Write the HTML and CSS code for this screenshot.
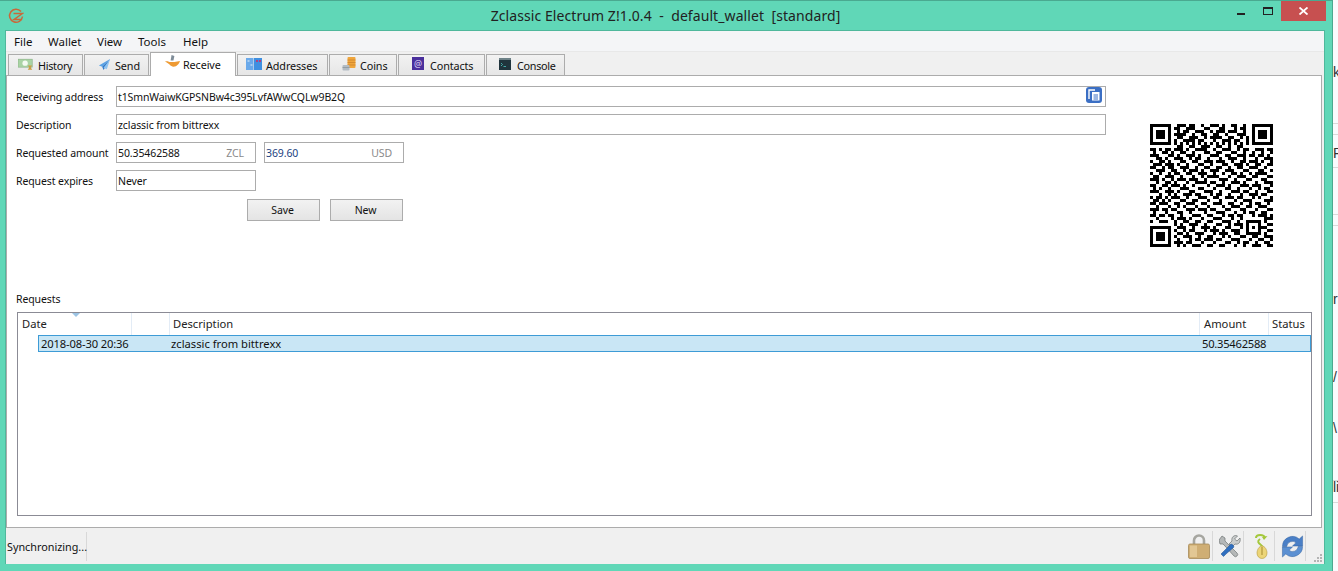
FILE: index.html
```html
<!DOCTYPE html>
<html lang="en">
<head>
<meta charset="utf-8">
<title>Zclassic Electrum Z!1.0.4</title>
<link rel="stylesheet" href="styles.css">
</head>
<body>
<div class="screen">
  <div class="window">
    <header class="titlebar">
      <div class="title-left">
        <svg class="logo" viewBox="0 0 16 16"><path d="M13 3.500A6.500 6.500 0 1 0 14.500 8.500" fill="none" stroke="#c9683a" stroke-width="1.500"/><path d="M5.500 5.500h9L6 11.500h7.500" fill="none" stroke="#c9683a" stroke-width="1.500"/></svg>
      </div>
      <div class="title-text">Zclassic Electrum Z!1.0.4&nbsp; -&nbsp; default_wallet&nbsp; [standard]</div>
      <div class="caption">
        <span class="cap-min"></span>
        <span class="cap-max"></span>
        <span class="cap-close"><svg viewBox="0 0 9 8" width="9" height="8"><path d="M.5.5l8 7M8.500.5l-8 7" stroke="#fff" stroke-width="1.800"/></svg></span>
      </div>
    </header>
    <div class="client">
      <nav class="menubar">
        <span class="menu m-file">File</span><span class="menu m-wallet">Wallet</span><span class="menu m-view">View</span><span class="menu m-tools">Tools</span><span class="menu m-help">Help</span>
      </nav>
      <div class="tabbar">
        <div class="tab t-history">
          <svg class="ticon" viewBox="0 0 18 14"><rect y="1" width="16" height="9" fill="#a9d3a4" stroke="#7fa97e" stroke-width=".6"/><circle cx="8" cy="5.500" r="3" fill="#f4fbf2"/><path d="M11 8h5l-1.700 2.500L16 13h-5l1.700-2.500z" fill="#c99f45"/></svg>
          <span>History</span>
        </div>
        <div class="tab t-send">
          <svg class="ticon ticon-send" viewBox="0 0 14 14"><path d="M13 1L1 8l3.500 1.500z" fill="#5aa3e6"/><path d="M13 1L4.500 9.500 6 13z" fill="#2f78c9"/><path d="M13 1L6 10.500l3.500 1.500z" fill="#8fc3f0"/></svg>
          <span>Send</span>
        </div>
        <div class="tab t-receive active">
          <svg class="ticon ticon-lg" viewBox="0 0 16 16"><path d="M0 8c3-1 4 .5 6 .5h4c2 0 4-1 6-1-1 3-3 6-7 6-3 0-5-4-9-5.500z" fill="#ee9a33"/><path d="M7 1l3 1-1 5H6z" fill="#7e8c98"/></svg>
          <span>Receive</span>
        </div>
        <div class="tab t-addresses">
          <svg class="ticon" viewBox="0 0 16 13"><rect width="7.500" height="12" fill="#6aa9ea"/><rect x="8" width="8" height="12" fill="#3f8fe0"/><rect x="1.500" y="2" width="2" height="2" fill="#a8cdf2"/><rect x="4.500" y="6" width="2" height="2" fill="#a8cdf2"/><rect x="10" y="2" width="2" height="2" fill="#b0417f"/><rect x="13" y="2" width="2" height="2" fill="#b0417f"/></svg>
          <span>Addresses</span>
        </div>
        <div class="tab t-coins">
          <svg class="ticon ticon-coins" viewBox="0 0 13 14"><rect x="5" y="0" width="8" height="11" rx="1" fill="#f0a63c"/><path d="M5 3h8M5 5.500h8M5 8h8" stroke="#c9802a" stroke-width=".7"/><rect y="8" width="7" height="5.500" rx="1" fill="#b3bcc4"/><path d="M0 10.500h7" stroke="#85909a" stroke-width=".7"/></svg>
          <span>Coins</span>
        </div>
        <div class="tab t-contacts">
          <span class="at-icon">@</span>
          <span>Contacts</span>
        </div>
        <div class="tab t-console">
          <svg class="ticon ticon-console" viewBox="0 0 12 12"><rect width="12" height="12" fill="#20343c"/><rect width="12" height="2" fill="#6e8288"/><path d="M2 5l1.500 1.500L2 8" stroke="#4fc7c0" fill="none" stroke-width=".8"/><path d="M4.500 8.500h2.500" stroke="#4fc7c0" stroke-width=".8"/></svg>
          <span>Console</span>
        </div>
      </div>
      <main class="panel">
        <section class="top">
          <div class="form">
            <div class="row">
              <label class="label">Receiving address</label>
              <div class="field field-full">
                <span>t1SmnWaiwKGPSNBw4c395LvfAWwCQLw9B2Q</span>
                <svg class="copy" viewBox="0 0 16 16"><rect width="16" height="16" rx="3" fill="#3b6fc4"/><path d="M3 12V3h6" fill="none" stroke="#fff" stroke-width="1.400"/><rect x="6" y="5" width="7.500" height="8.500" fill="#fff"/><path d="M7.500 8h4.500M7.500 10h4.500M7.500 12h4.500" stroke="#3b6fc4"/></svg>
              </div>
            </div>
            <div class="row">
              <label class="label">Description</label>
              <div class="field field-full"><span>zclassic from bittrexx</span></div>
            </div>
            <div class="row">
              <label class="label">Requested amount</label>
              <div class="field field-small"><span>50.35462588</span><span class="unit">ZCL</span></div>
              <div class="field field-small field-fiat"><span>369.60</span><span class="unit">USD</span></div>
            </div>
            <div class="row">
              <label class="label">Request expires</label>
              <div class="field field-small"><span>Never</span></div>
            </div>
            <div class="buttons">
              <button class="btn">Save</button>
              <button class="btn">New</button>
            </div>
          </div>
          <svg class="qr" viewBox="0 0 41 41" shape-rendering="crispEdges"><path fill="none" stroke="#000" stroke-width="1" d="M0 .5h7M9 .5h3M13 .5h2M17 .5h1M20 .5h3M24 .5h1M27 .5h2M31 .5h1M34 .5h7M0 1.500h1M6 1.500h1M8 1.500h2M12 1.500h3M18 1.500h2M23 1.500h2M28 1.500h1M30 1.500h2M34 1.500h1M40 1.500h1M0 2.500h1M2 2.500h3M6 2.500h1M9 2.500h1M11 2.500h2M15 2.500h3M20 2.500h1M22 2.500h3M26 2.500h3M31 2.500h1M34 2.500h1M36 2.500h3M40 2.500h1M0 3.500h1M2 3.500h3M6 3.500h1M8 3.500h4M14 3.500h1M17 3.500h2M21 3.500h2M25 3.500h1M29 3.500h3M34 3.500h1M36 3.500h3M40 3.500h1M0 4.500h1M2 4.500h3M6 4.500h1M9 4.500h2M13 4.500h3M18 4.500h1M20 4.500h4M26 4.500h2M30 4.500h1M32 4.500h1M34 4.500h1M36 4.500h3M40 4.500h1M0 5.500h1M6 5.500h1M8 5.500h1M11 5.500h4M16 5.500h2M21 5.500h1M24 5.500h3M28 5.500h2M32 5.500h1M34 5.500h1M40 5.500h1M0 6.500h7M8 6.500h1M10 6.500h1M12 6.500h1M14 6.500h1M16 6.500h1M18 6.500h1M20 6.500h1M22 6.500h1M24 6.500h1M26 6.500h1M28 6.500h1M30 6.500h1M32 6.500h1M34 6.500h7M9 7.500h2M13 7.500h2M17 7.500h3M22 7.500h2M26 7.500h1M29 7.500h2M0 8.500h2M3 8.500h1M5 8.500h2M8 8.500h3M12 8.500h1M15 8.500h4M21 8.500h1M24 8.500h3M29 8.500h1M31 8.500h2M35 8.500h3M39 8.500h2M1 9.500h1M4 9.500h2M7 9.500h1M10 9.500h2M14 9.500h1M18 9.500h2M22 9.500h2M27 9.500h2M31 9.500h1M34 9.500h1M37 9.500h1M40 9.500h1M0 10.500h3M6 10.500h2M9 10.500h1M12 10.500h3M16 10.500h1M20 10.500h3M25 10.500h2M29 10.500h3M33 10.500h2M36 10.500h2M39 10.500h1M2 11.500h2M5 11.500h1M8 11.500h3M13 11.500h1M15 11.500h2M19 11.500h1M23 11.500h1M26 11.500h3M31 11.500h1M35 11.500h1M38 11.500h3M0 12.500h1M3 12.500h2M6 12.500h1M10 12.500h2M14 12.500h2M18 12.500h3M22 12.500h3M27 12.500h1M30 12.500h2M33 12.500h3M37 12.500h1M40 12.500h1M1 13.500h3M5 13.500h3M9 13.500h1M12 13.500h1M16 13.500h2M20 13.500h1M24 13.500h2M28 13.500h3M32 13.500h1M35 13.500h2M39 13.500h2M0 14.500h2M4 14.500h1M6 14.500h2M10 14.500h3M15 14.500h1M18 14.500h2M22 14.500h2M26 14.500h1M29 14.500h2M33 14.500h3M38 14.500h1M2 15.500h3M7 15.500h2M11 15.500h1M13 15.500h3M17 15.500h1M20 15.500h3M25 15.500h3M31 15.500h2M36 15.500h2M40 15.500h1M0 16.500h1M3 16.500h1M6 16.500h1M8 16.500h2M12 16.500h2M16 16.500h3M21 16.500h1M24 16.500h1M27 16.500h2M30 16.500h1M33 16.500h1M35 16.500h4M1 17.500h2M5 17.500h3M10 17.500h1M14 17.500h1M17 17.500h1M19 17.500h4M26 17.500h1M29 17.500h3M34 17.500h2M39 17.500h2M0 18.500h3M4 18.500h1M7 18.500h1M9 18.500h3M13 18.500h3M18 18.500h1M23 18.500h3M28 18.500h1M32 18.500h2M37 18.500h2M2 19.500h1M5 19.500h2M8 19.500h1M12 19.500h1M15 19.500h4M20 19.500h2M24 19.500h1M27 19.500h3M31 19.500h1M35 19.500h1M38 19.500h3M0 20.500h2M4 20.500h2M7 20.500h3M11 20.500h1M14 20.500h1M19 20.500h1M22 20.500h3M26 20.500h1M30 20.500h3M34 20.500h3M40 20.500h1M1 21.500h1M3 21.500h1M6 21.500h1M10 21.500h3M16 21.500h2M21 21.500h1M25 21.500h2M29 21.500h1M33 21.500h1M36 21.500h1M38 21.500h2M0 22.500h3M5 22.500h3M9 22.500h1M13 22.500h2M18 22.500h3M23 22.500h1M27 22.500h3M31 22.500h2M35 22.500h1M39 22.500h2M3 23.500h1M6 23.500h1M8 23.500h1M11 23.500h3M15 23.500h2M20 23.500h1M22 23.500h2M26 23.500h1M30 23.500h1M33 23.500h3M37 23.500h2M0 24.500h1M2 24.500h2M5 24.500h1M7 24.500h3M12 24.500h1M16 24.500h3M21 24.500h2M25 24.500h3M29 24.500h2M34 24.500h1M36 24.500h1M40 24.500h1M1 25.500h2M4 25.500h1M6 25.500h1M10 25.500h2M14 25.500h2M19 25.500h1M23 25.500h1M28 25.500h1M31 25.500h3M38 25.500h3M0 26.500h2M3 26.500h3M8 26.500h2M12 26.500h3M17 26.500h2M21 26.500h3M26 26.500h2M30 26.500h1M33 26.500h1M35 26.500h2M39 26.500h1M2 27.500h1M6 27.500h1M9 27.500h1M11 27.500h1M15 27.500h1M19 27.500h1M24 27.500h1M27 27.500h3M32 27.500h2M36 27.500h3M0 28.500h3M4 28.500h2M7 28.500h2M12 28.500h3M16 28.500h3M20 28.500h2M25 28.500h2M30 28.500h2M35 28.500h1M39 28.500h2M1 29.500h1M5 29.500h1M9 29.500h2M13 29.500h1M18 29.500h1M22 29.500h3M28 29.500h1M31 29.500h1M33 29.500h2M37 29.500h2M0 30.500h2M3 30.500h2M6 30.500h2M10 30.500h1M14 30.500h3M19 30.500h2M24 30.500h1M26 30.500h2M29 30.500h2M34 30.500h1M36 30.500h3M40 30.500h1M2 31.500h1M7 31.500h1M9 31.500h3M13 31.500h1M17 31.500h1M21 31.500h3M27 31.500h1M30 31.500h1M38 31.500h3M0 32.500h1M3 32.500h3M8 32.500h1M11 32.500h2M15 32.500h2M19 32.500h2M24 32.500h3M29 32.500h1M32 32.500h5M38 32.500h1M8 33.500h1M10 33.500h1M13 33.500h3M18 33.500h1M22 33.500h2M26 33.500h1M28 33.500h3M32 33.500h1M36 33.500h1M39 33.500h2M0 34.500h7M9 34.500h3M14 34.500h1M17 34.500h3M21 34.500h1M25 34.500h2M30 34.500h1M32 34.500h1M34 34.500h1M36 34.500h3M0 35.500h1M6 35.500h1M8 35.500h1M11 35.500h1M13 35.500h2M18 35.500h1M20 35.500h3M24 35.500h1M27 35.500h3M32 35.500h1M36 35.500h1M39 35.500h2M0 36.500h1M2 36.500h3M6 36.500h1M9 36.500h2M12 36.500h1M15 36.500h3M21 36.500h1M23 36.500h3M28 36.500h2M32 36.500h5M38 36.500h1M0 37.500h1M2 37.500h3M6 37.500h1M8 37.500h1M11 37.500h3M16 37.500h1M19 37.500h2M24 37.500h1M26 37.500h1M30 37.500h2M34 37.500h2M38 37.500h3M0 38.500h1M2 38.500h3M6 38.500h1M9 38.500h1M13 38.500h1M15 38.500h2M18 38.500h3M22 38.500h2M27 38.500h3M33 38.500h1M36 38.500h2M40 38.500h1M0 39.500h1M6 39.500h1M8 39.500h3M12 39.500h2M17 39.500h1M21 39.500h1M25 39.500h2M29 39.500h1M31 39.500h2M35 39.500h1M38 39.500h2M0 40.500h7M9 40.500h1M11 40.500h1M14 40.500h3M19 40.500h2M23 40.500h2M28 40.500h1M31 40.500h1M34 40.500h3M39 40.500h2"/></svg>
        </section>
        <div class="requests-label">Requests</div>
        <div class="table">
          <svg class="sort" viewBox="0 0 8 4"><path d="M0 0h8L4 4z" fill="#9cc4e4"/></svg>
          <div class="thead">
            <div class="th c-date">Date</div>
            <div class="th c-blank"></div>
            <div class="th c-desc">Description</div>
            <div class="th c-amount">Amount</div>
            <div class="th c-status">Status</div>
          </div>
          <div class="tr">
            <div class="td-date">2018-08-30 20:36</div>
            <div class="td-desc">zclassic from bittrexx</div>
            <div class="td-amount">50.35462588</div>
          </div>
        </div>
      </main>
      <footer class="statusbar">
        <div class="status-msg">Synchronizing...</div>
        <div class="status-icons">
          <button class="sbtn"><svg viewBox="0 0 22 26" width="22" height="26"><path d="M6 13V7.500a5 5 0 0110 0V13" fill="none" stroke="#a6a6a0" stroke-width="2.600"/><rect x=".5" y="11" width="21" height="14.500" rx="1.500" fill="#cfae74" stroke="#a68a58" stroke-width=".8"/><rect x="2" y="12.500" width="7" height="11.500" fill="#e6cd9c" opacity=".8"/></svg></button>
          <button class="sbtn"><svg viewBox="0 0 22 24" width="22" height="24"><path d="M3 2l3 2v3l3 3 9 9a2 2 0 01-3 3L6 12 4 10H1L0 6z" fill="#b5b8b8" stroke="#6f7474" stroke-width=".7"/><path d="M21 4l-3 3-2.500-2L18.500 2c-3-1.500-6.500 1-5.500 5L10 10l3 3 3-3c3.500 1 6-2 5-6z" fill="#c9cccc" stroke="#6f7474" stroke-width=".7"/><path d="M12 10L4 18l-2 2 2.500 2.500L7 20l8-7-1-2z" fill="#2f6fc0" stroke="#1f4f90" stroke-width=".5"/></svg></button>
          <button class="sbtn"><svg viewBox="0 0 16 26" width="16" height="26"><path d="M3 5c0-4 8-4 9 0M7 6c-3 2-2 4 1 6 1 .7 1.500 1.300 1.500 2" fill="none" stroke="#a4c83c" stroke-width="2"/><path d="M14.500 3l-3.500 4-2-3z" fill="#a4c83c"/><path d="M9 13c3 0 5 4 5 7 0 3-2 5.500-5 5.500s-5-2.500-5-5.500c0-3 2-7 5-7z" fill="#ecd577" stroke="#b69b3e" stroke-width=".6"/><path d="M9 14v8" stroke="#a58a30" stroke-width="1"/></svg></button>
          <button class="sbtn"><svg viewBox="0 0 24 24" width="23" height="23"><path d="M1.500 12A10.500 10.500 0 0119 4.200L22.500 1v10.500H12L15.700 8A6 6 0 006 12z" fill="#4a7fc6" stroke="#2f5f9f" stroke-width=".5"/><path d="M22.500 12A10.500 10.500 0 015 19.800L1.500 23V12.500H12L8.300 16A6 6 0 0018 12z" fill="#5b90d2" stroke="#2f5f9f" stroke-width=".5"/></svg></button>
          <svg class="grip" viewBox="0 0 10 10"><path d="M7 1h2v2H7zM4 4h2v2H4zM7 4h2v2H7zM1 7h2v2H1zM4 7h2v2H4zM7 7h2v2H7z" fill="#b4b4b4"/></svg>
        </div>
      </footer>
    </div>
  </div>
  <aside class="behind">
    <span class="frag f-k">k</span>
    <span class="frag f-p">P</span>
    <span class="frag f-r">r</span>
    <span class="frag f-s">/</span>
    <span class="frag f-v">\</span>
    <span class="frag f-l">li</span>
    <i class="rule r1"></i><i class="rule r2"></i><i class="rule r3"></i><i class="rule r4"></i><i class="rule r5"></i><i class="rule r6"></i><i class="rule r7"></i>
  </aside>
</div>
</body>
</html>
```
FILE: styles.css
```css
* { box-sizing: border-box; }
html, body { margin: 0; padding: 0; }
body {
  width: 1338px;
  height: 571px;
  overflow: hidden;
  font-family: "Noto Sans", "Open Sans", sans-serif;
  font-size: 10.500px;
  letter-spacing: -.1px;
  color: #111;
}
.screen { display: flex; width: 1338px; height: 571px; }

.window {
  width: 1333px;
  height: 571px;
  background: #60d7b7;
  border-top: 1px solid #4aa990;
  border-right: 1px solid #4aa990;
  padding: 0 7px 0 5px;
  display: flex;
  flex-direction: column;
}
.titlebar {
  height: 29px;
  margin-right: -7px;
  display: grid;
  grid-template-columns: 1fr auto 1fr;
  align-items: start;
  flex: none;
}
.title-left { padding: 7px 0 0 3px; }
.logo { display: block; width: 16px; height: 16px; }
.title-text {
  font-size: 14px;
  line-height: 30px;
  color: #222;
  white-space: nowrap;
  letter-spacing: .08px;
  padding-right: 6px;
}
.caption { display: flex; justify-content: flex-end; align-items: flex-start; padding-right: 6px; }
.cap-min { width: 8px; height: 2px; background: #222; margin: 12px 18px 0 0; }
.cap-max { width: 10px; height: 8px; border: 1px solid #222; border-top-width: 2px; margin: 6px 8px 0 0; }
.cap-close {
  width: 45px;
  height: 20px;
  background: #c75050;
  display: flex;
  align-items: center;
  justify-content: center;
}

.client {
  flex: 1;
  border: 1px solid #4fb89c;
  border-bottom: 0;
  background: #f0f0f0;
  display: flex;
  flex-direction: column;
  min-height: 0;
  margin-bottom: 7px;
}
.menubar {
  height: 21px;
  flex: none;
  background: #f4f5f7;
  border-bottom: 1px solid #e8e8e8;
  display: flex;
  align-items: center;
  padding-left: 8px;
  font-size: 11.500px;
  letter-spacing: 0;
}
.menu { display: block; }
.m-file { width: 34px; }
.m-wallet { width: 49px; }
.m-view { width: 41px; }
.m-tools { width: 45px; }

.tabbar {
  height: 23px;
  flex: none;
  display: flex;
  align-items: flex-end;
  gap: 1px;
  padding-left: 2px;
  position: relative;
  z-index: 1;
}
.tab {
  height: 21px;
  border: 1px solid #acacac;
  border-bottom: 0;
  background: linear-gradient(#f2f2f2, #e6e6e6);
  display: flex;
  align-items: center;
  gap: 4px;
  white-space: nowrap;
  font-size: 10.800px;
}
.tab.active {
  height: 24px;
  background: #fff;
  margin-bottom: -1px;
}
.t-history { width: 75px; padding-left: 9px; letter-spacing: -.3px; }
.t-send { width: 65px; padding-left: 13px; }
.t-receive { width: 86px; padding-left: 14px; gap: 3px; }
.t-addresses { width: 91px; padding-left: 8px; }
.t-coins { width: 68px; padding-left: 12px; gap: 4px; }
.t-contacts { width: 87px; padding-left: 13px; gap: 6px; }
.t-console { width: 79px; padding-left: 12px; gap: 6px; letter-spacing: -.3px; }
.ticon { width: 16px; height: 13px; display: block; margin-top: -2px; flex: none; }
.ticon-send { width: 13px; }
.ticon-lg { width: 15px; height: 15px; margin-top: -6px; }
.ticon-coins { width: 14px; height: 14px; margin-top: -3px; }
.ticon-console { width: 12px; height: 12px; }
.at-icon {
  width: 12px;
  height: 13px;
  background: #4a2f9c;
  color: #ddd5f5;
  font-size: 9px;
  line-height: 13px;
  text-align: center;
  margin-top: -3px;
}

.panel {
  height: 453px;
  flex: none;
  margin-right: 2px;
  background: #fff;
  border: 1px solid #acacac;
  padding: 10px 10px 0 9px;
}
.top { display: flex; height: 205px; }
.form { width: 1090px; flex: none; display: flex; flex-direction: column; gap: 7px; }
.row { display: flex; align-items: center; gap: 8px; height: 21px; }
.label { width: 92px; flex: none; white-space: nowrap; }
.field {
  height: 21px;
  border: 1px solid #acacac;
  display: flex;
  align-items: center;
  justify-content: space-between;
  padding: 0 1px;
  background: #fff;
  white-space: nowrap;
}
.field-full { width: 990px; }
.field-small { width: 140px; }
.field-fiat { color: #1c3f80; }
.unit { color: #8a8a8a; margin-right: 10px; }
.copy { width: 16px; height: 16px; margin: 0 2px 0 0; align-self: flex-start; }
.buttons { display: flex; gap: 10px; margin: 1px 0 0 231px; }
.btn {
  width: 73px;
  height: 22px;
  font: inherit;
  letter-spacing: inherit;
  color: #111;
  background: linear-gradient(#f2f2f2, #e4e4e4);
  border: 1px solid #acacac;
  padding: 0 2px 0 0;
}
.qr { width: 123px; height: 123px; margin: 38px 0 0 44px; flex: none; display: block; }

.requests-label { height: 21px; line-height: 17px; }
.table {
  width: 1295px;
  height: 204px;
  margin-left: 1px;
  border: 1px solid #8b8b95;
  position: relative;
  font-size: 11.200px;
  letter-spacing: 0;
}
.sort { position: absolute; left: 54px; top: 0; width: 8px; height: 4px; }
.thead { display: flex; height: 22px; }
.th {
  height: 22px;
  line-height: 22px;
  padding-left: 4px;
  border-right: 1px solid #e3ecf6;
  white-space: nowrap;
  color: #222;
}
.c-date { width: 114px; }
.c-blank { width: 38px; }
.c-desc { width: 1030px; padding-left: 3px; }
.c-amount { width: 69px; padding-left: 4px; }
.c-status { width: 42px; border-right: 0; padding-left: 3px; }
.tr {
  margin-left: 20px;
  height: 17px;
  background: #c9e6f5;
  border: 1px solid #3d9bd6;
  display: flex;
  align-items: center;
  white-space: nowrap;
}
.td-date { width: 132px; padding-left: 2px; letter-spacing: -.15px; }
.td-desc { width: 1030px; }
.td-amount { padding-left: 1px; letter-spacing: -.25px; }

.statusbar {
  flex: 1;
  display: flex;
  align-items: stretch;
  justify-content: space-between;
  background: #f0f0f0;
  min-height: 0;
}
.status-msg {
  width: 81px;
  border-right: 1px solid #d8d8d8;
  margin: 4px 0 3px;
  padding-left: 1px;
  display: flex;
  align-items: center;
  white-space: nowrap;
  font-size: 10.800px;
  letter-spacing: 0;
}
.status-icons { display: flex; align-items: center; padding-right: 1px; }
.sbtn {
  width: 31px;
  height: 30px;
  padding: 0 0 0 4px;
  background: none;
  border: 0;
  border-right: 1px solid #d8d8d8;
  display: flex;
  align-items: center;
  justify-content: center;
}
.grip { width: 10px; height: 10px; align-self: flex-end; margin: 0 0 1px 7px; }

.behind {
  width: 5px;
  height: 571px;
  background: #fafafd;
  position: relative;
  overflow: hidden;
  font-family: "Liberation Sans", sans-serif;
  font-size: 14px;
  color: #333;
}
.frag { position: absolute; left: 0; line-height: 16px; }
.f-k { top: 64px; }
.f-p { top: 145px; }
.f-r { top: 291px; }
.f-s { top: 369px; }
.f-v { top: 420px; }
.f-l { top: 479px; }
.rule { position: absolute; left: 0; width: 5px; height: 1px; background: #d9d9d9; }
.r1 { top: 123px; }
.r2 { top: 134px; }
.r3 { top: 167px; }
.r4 { top: 214px; }
.r5 { top: 225px; }
.r6 { top: 480px; }
.r7 { top: 502px; }
```
